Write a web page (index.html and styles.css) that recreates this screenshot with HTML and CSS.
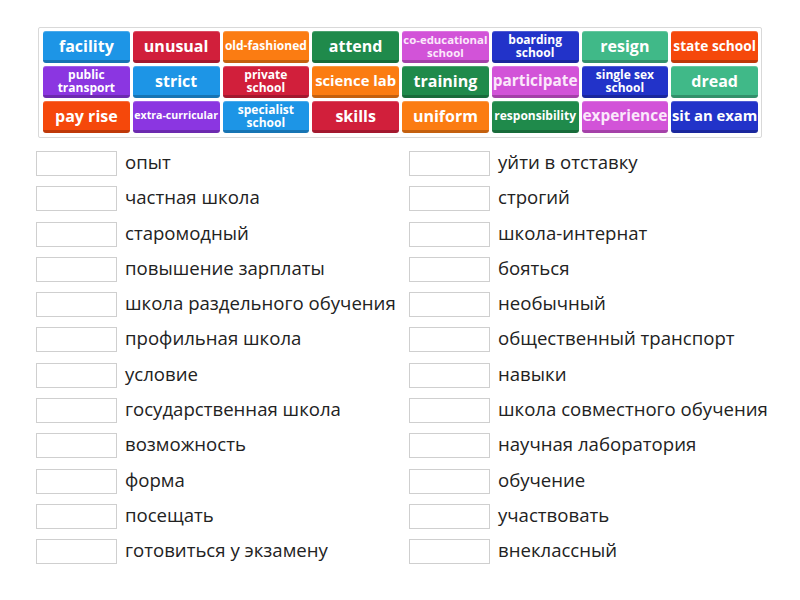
FILE: index.html
```html
<!DOCTYPE html>
<html lang="en">
<head>
  <meta charset="UTF-8" />
  <title>Match up</title>
  <link rel="stylesheet" href="styles.css">
</head>
<body>
  <div class="activity">
    <!-- Word bank -->
    <div class="bank">
      <div class="tile blue">facility</div>
      <div class="tile red">unusual</div>
      <div class="tile orange small">old-fashioned</div>
      <div class="tile green">attend</div>
      <div class="tile pink small xs">co-educational<br>school</div>
      <div class="tile navy small">boarding<br>school</div>
      <div class="tile teal">resign</div>
      <div class="tile flame mid">state school</div>

      <div class="tile violet small">public<br>transport</div>
      <div class="tile blue">strict</div>
      <div class="tile red small">private<br>school</div>
      <div class="tile orange mid wide">science lab</div>
      <div class="tile green">training</div>
      <div class="tile pink fit">participate</div>
      <div class="tile navy small">single sex<br>school</div>
      <div class="tile teal">dread</div>

      <div class="tile flame">pay rise</div>
      <div class="tile violet tiny">extra-curricular</div>
      <div class="tile blue small">specialist<br>school</div>
      <div class="tile red">skills</div>
      <div class="tile orange">uniform</div>
      <div class="tile green small">responsibility</div>
      <div class="tile pink fit">experience</div>
      <div class="tile navy mid wide">sit an exam</div>
    </div>

    <!-- Answer rows -->
    <div class="pairs">
      <div class="col">
        <div class="pair"><span class="slot"></span><span class="word">опыт</span></div>
        <div class="pair"><span class="slot"></span><span class="word">частная школа</span></div>
        <div class="pair"><span class="slot"></span><span class="word">старомодный</span></div>
        <div class="pair"><span class="slot"></span><span class="word">повышение зарплаты</span></div>
        <div class="pair"><span class="slot"></span><span class="word">школа раздельного обучения</span></div>
        <div class="pair"><span class="slot"></span><span class="word">профильная школа</span></div>
        <div class="pair"><span class="slot"></span><span class="word">условие</span></div>
        <div class="pair"><span class="slot"></span><span class="word">государственная школа</span></div>
        <div class="pair"><span class="slot"></span><span class="word">возможность</span></div>
        <div class="pair"><span class="slot"></span><span class="word">форма</span></div>
        <div class="pair"><span class="slot"></span><span class="word">посещать</span></div>
        <div class="pair"><span class="slot"></span><span class="word">готовиться у экзамену</span></div>
      </div>
      <div class="col">
        <div class="pair"><span class="slot"></span><span class="word">уйти в отставку</span></div>
        <div class="pair"><span class="slot"></span><span class="word">строгий</span></div>
        <div class="pair"><span class="slot"></span><span class="word">школа-интернат</span></div>
        <div class="pair"><span class="slot"></span><span class="word">бояться</span></div>
        <div class="pair"><span class="slot"></span><span class="word">необычный</span></div>
        <div class="pair"><span class="slot"></span><span class="word">общественный транспорт</span></div>
        <div class="pair"><span class="slot"></span><span class="word">навыки</span></div>
        <div class="pair"><span class="slot"></span><span class="word">школа совместного обучения</span></div>
        <div class="pair"><span class="slot"></span><span class="word">научная лаборатория</span></div>
        <div class="pair"><span class="slot"></span><span class="word">обучение</span></div>
        <div class="pair"><span class="slot"></span><span class="word">участвовать</span></div>
        <div class="pair"><span class="slot"></span><span class="word">внеклассный</span></div>
      </div>
    </div>
  </div>
</body>
</html>
```

FILE: styles.css
```css
:root {
  --text-color: #222;
  --slot-border: #cfcfcf;
  --font-sans: 'Open Sans', 'Noto Sans', Arial, sans-serif;
}

body {
  margin: 0;
  background: #fff;
  font-family: var(--font-sans);
  color: var(--text-color);
}

.activity {
  padding: 27px 38px 0 36px;
}

/* word bank */
.bank {
  display: grid;
  grid-template-columns: repeat(8, 1fr);
  gap: 3px;
  padding: 3px 3px 4px 4px;
  margin-left: 2px;
  border: 1px solid #d9d9d9;
  border-radius: 2px;
}

.tile {
  height: 32px;
  box-sizing: border-box;
  display: flex;
  align-items: center;
  justify-content: center;
  text-align: center;
  color: #fff;
  font-weight: 700;
  font-size: 16px;
  line-height: 1;
  border-radius: 3px;
  border-bottom: 3px solid rgba(0, 0, 0, 0.22);
  box-shadow: inset 0 1px 0 rgba(255, 255, 255, 0.2);
  white-space: nowrap;
  overflow: hidden;
}

.tile.mid { font-size: 13.7px; }
.tile.wide { font-size: 14.8px; }
.tile.fit { font-size: 15.4px; }
.tile.small { font-size: 12px; line-height: 13px; }
.tile.xs { font-size: 11.4px; }
.tile.tiny { font-size: 10.6px; }

.blue   { background: #1d95e6; }
.red    { background: #d11f3b; }
.orange { background: #fb7c12; }
.green  { background: #1f8a4b; }
.pink   { background: #d253d8; color: #fbe8fb; }
.navy   { background: #2233c9; }
.teal   { background: #40b988; }
.flame  { background: #f5480b; }
.violet { background: #8b36e1; }

/* answer rows */
.pairs {
  display: grid;
  grid-template-columns: 373px 1fr;
  margin-top: 13px;
}

.pair {
  display: flex;
  align-items: center;
  height: 25px;
  margin-bottom: 10.3px;
}

.slot {
  width: 81px;
  height: 25px;
  box-sizing: border-box;
  border: 1px solid var(--slot-border);
  flex-shrink: 0;
}

.word {
  margin-left: 8px;
  font-size: 18.6px;
  margin-top: -4px;
  white-space: nowrap;
}
```
